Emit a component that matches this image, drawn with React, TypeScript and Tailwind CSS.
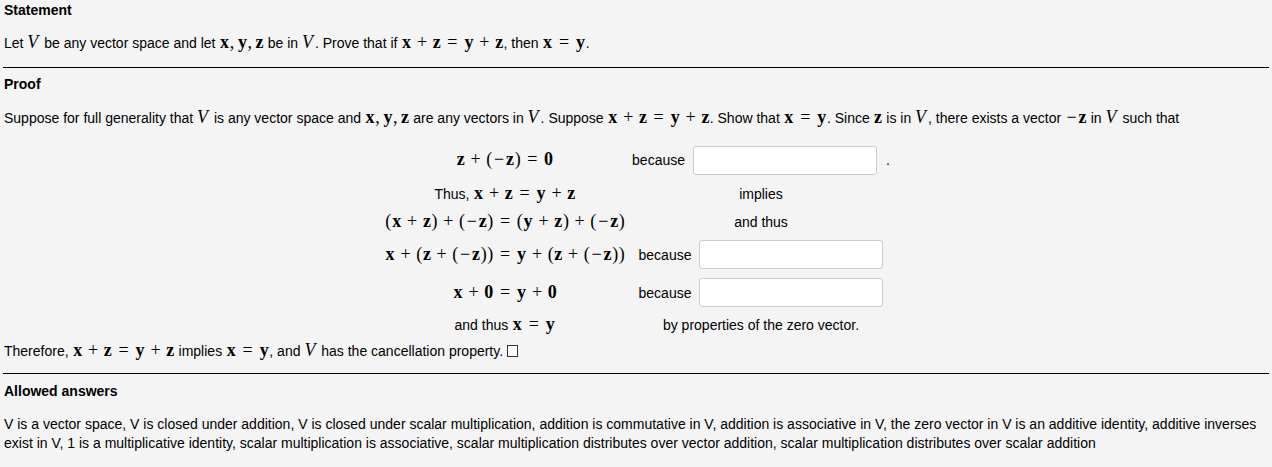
import React from "react";

// tiny renderer for the inline maths: bold vectors, italic V, spaced operators
function M({ t }: { t: string }) {
  const out: React.ReactNode[] = [];
  let prev = "";
  t.split("").forEach((c, i) => {
    if (c === " ") return;
    if (c === "x" || c === "y") {
      out.push(<span key={i} className="font-bold px-[0.65px]">{c}</span>);
    } else if (c === "z") {
      out.push(<span key={i} className="font-bold px-[0.35px]">z</span>);
    } else if (c === "0") {
      out.push(<span key={i} className="font-bold px-[0.4px]">0</span>);
    } else if (c === "V") {
      out.push(<span key={i} className="italic pr-[2px]">V</span>);
    } else if (c === "+") {
      out.push(<span key={i} className="px-[5.3px]">+</span>);
    } else if (c === "=") {
      out.push(<span key={i} className="px-[6.3px]">=</span>);
    } else if (c === "−") {
      const unary = prev === "(" || prev === "";
      out.push(
        <span key={i} className={unary ? "px-[1.5px]" : "px-[5.3px]"}>−</span>
      );
    } else if (c === ",") {
      out.push(<span key={i} className="pr-[3.1px]">,</span>);
    } else {
      out.push(<span key={i} className="px-[0.3px]">{c}</span>);
    }
    prev = c;
  });
  return (
    <span className="font-['Liberation_Serif',serif] text-[18px] leading-[16px] whitespace-nowrap">
      {out}
    </span>
  );
}

const Blank = () => (
  <span className="inline-block w-[184px] h-[29px] bg-white border border-[#cccccc] rounded-[3px] align-middle" />
);

const rows: { left: React.ReactNode; right: React.ReactNode }[] = [
  {
    left: <M t="z+(−z)=0" />,
    right: (
      <span className="flex items-center">
        because<span className="ml-[8px] flex"><Blank /></span><span className="ml-[9px]">.</span>
      </span>
    ),
  },
  { left: <span>Thus, <M t="x+z=y+z" /></span>, right: "implies" },
  { left: <M t="(x+z)+(−z)=(y+z)+(−z)" />, right: "and thus" },
  {
    left: <M t="x+(z+(−z))=y+(z+(−z))" />,
    right: (
      <span className="flex items-center">
        because<span className="ml-[8px] flex"><Blank /></span>
      </span>
    ),
  },
  {
    left: <M t="x+0=y+0" />,
    right: (
      <span className="flex items-center">
        because<span className="ml-[8px] flex"><Blank /></span>
      </span>
    ),
  },
  { left: <span>and thus <M t="x=y" /></span>, right: "by properties of the zero vector." },
];

export default function App() {
  return (
    <div className="min-h-[467px] w-[1272px] bg-[#f4f4f4] text-black font-['Liberation_Sans',Arial,sans-serif] text-[14px] px-[3px]">
      <div className="h-[18px] leading-[18px] pt-[1px] pl-[1px] font-bold text-[14px]">Statement</div>
      <p className="mt-[15px] h-[20px] leading-[20px] pl-[1px]">
        Let <M t="V" /> be any vector space and let <M t="x,y,z" /> be in <M t="V" />. Prove that if{" "}
        <M t="x+z=y+z" />, then <M t="x=y" />.
      </p>
      <div className="mt-[14px] border-t border-black" />

      <div className="mt-[7px] h-[18px] leading-[18px] pl-[1px] font-bold text-[14px]">Proof</div>
      <p className="mt-[15px] h-[20px] leading-[20px] pl-[1px] whitespace-nowrap">
        Suppose for full generality that <M t="V" /> is any vector space and <M t="x,y,z" /> are any
        vectors in <M t="V" />. Suppose <M t="x+z=y+z" />. Show that <M t="x=y" />. Since{" "}
        <M t="z" /> is in <M t="V" />, there exists a vector <M t="−z" /> in <M t="V" /> such that
      </p>

      <div className="mt-[16px] mx-auto w-fit grid grid-cols-[250px_262px] grid-rows-[32px_36px_20px_45px_31px_34px] items-center justify-items-center">
        {rows.map((r, i) => (
          <React.Fragment key={i}>
            <div className="leading-[20px] whitespace-nowrap">{r.left}</div>
            <div className="leading-[20px] whitespace-nowrap">{r.right}</div>
          </React.Fragment>
        ))}
      </div>

      <p className="h-[16px] leading-[16px] pl-[1px]">
        Therefore, <M t="x+z=y+z" /> implies <M t="x=y" />, and <M t="V" /> has the cancellation property.{" "}
        <span className="inline-block w-[11px] h-[12px] border border-[#333] bg-white align-[-1px]" />
      </p>
      <div className="mt-[15px] border-t border-black" />

      <div className="mt-[8px] h-[18px] leading-[18px] pl-[1px] font-bold text-[14px]">Allowed answers</div>
      <p className="mt-[15px] leading-[19px] pl-[1px] pr-[8px]">
        V is a vector space, V is closed under addition, V is closed under scalar multiplication, addition is
        commutative in V, addition is associative in V, the zero vector in V is an additive identity, additive
        inverses exist in V, 1 is a multiplicative identity, scalar multiplication is associative, scalar
        multiplication distributes over vector addition, scalar multiplication distributes over scalar addition
      </p>
    </div>
  );
}
